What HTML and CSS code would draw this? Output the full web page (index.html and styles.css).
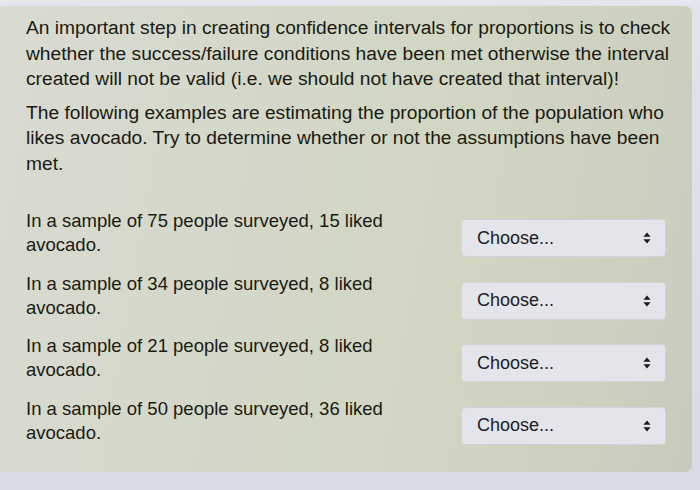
FILE: index.html
```html
<!DOCTYPE html>
<html lang="en">
<head>
<meta charset="utf-8">
<title>Confidence intervals</title>
<link rel="stylesheet" href="styles.css">
</head>
<body>
<div class="panel">
  <p class="para">An important step in creating confidence intervals for proportions is to check whether the success/failure conditions have been met otherwise the interval created will not be valid (i.e. we should not have created that interval)!</p>
  <p class="para">The following examples are estimating the proportion of the population who likes avocado. Try to determine whether or not the assumptions have been met.</p>
  <div class="items">
    <div class="item">
      <div class="question">In a sample of 75 people surveyed, 15 liked avocado.</div>
      <div class="select"><span>Choose...</span><svg class="arrows" width="8" height="12" viewBox="0 0 8 12"><path d="M4 0.5 L7.6 4.8 L0.4 4.8 Z M4 11.5 L7.6 7.2 L0.4 7.2 Z" fill="#1c1c22"/></svg></div>
    </div>
    <div class="item">
      <div class="question">In a sample of 34 people surveyed, 8 liked avocado.</div>
      <div class="select"><span>Choose...</span><svg class="arrows" width="8" height="12" viewBox="0 0 8 12"><path d="M4 0.5 L7.6 4.8 L0.4 4.8 Z M4 11.5 L7.6 7.2 L0.4 7.2 Z" fill="#1c1c22"/></svg></div>
    </div>
    <div class="item">
      <div class="question">In a sample of 21 people surveyed, 8 liked avocado.</div>
      <div class="select"><span>Choose...</span><svg class="arrows" width="8" height="12" viewBox="0 0 8 12"><path d="M4 0.5 L7.6 4.8 L0.4 4.8 Z M4 11.5 L7.6 7.2 L0.4 7.2 Z" fill="#1c1c22"/></svg></div>
    </div>
    <div class="item">
      <div class="question">In a sample of 50 people surveyed, 36 liked avocado.</div>
      <div class="select"><span>Choose...</span><svg class="arrows" width="8" height="12" viewBox="0 0 8 12"><path d="M4 0.5 L7.6 4.8 L0.4 4.8 Z M4 11.5 L7.6 7.2 L0.4 7.2 Z" fill="#1c1c22"/></svg></div>
    </div>
  </div>
</div>
</body>
</html>
```

FILE: styles.css
```css
html, body {
  margin: 0;
  padding: 0;
}
body {
  width: 700px;
  height: 490px;
  overflow: hidden;
  background: linear-gradient(180deg, #e6e8ee 0px, #e2e4ec 6px, #d8dae6 100%);
  font-family: "Liberation Sans", Arial, sans-serif;
  color: #1a1a12;
}
.panel {
  margin-top: 6px;
  width: 692px;
  height: 466px;
  box-sizing: border-box;
  padding: 9px 0 0 26px;
  border-radius: 0 7px 7px 0;
  background: linear-gradient(100deg, #dadbd3 0%, #d4d8c9 35%, #d1d7c3 60%, #cdd1c0 85%, #c8cbbc 100%);
}
.para {
  margin: 0 0 8px 0;
  width: 662px;
  font-size: 19.2px;
  line-height: 25.5px;
}
.items {
  margin-top: 33px;
  display: flex;
  flex-direction: column;
  gap: 14.5px;
}
.item {
  display: grid;
  grid-template-columns: 435px 205px;
  align-items: start;
}
.question {
  width: 400px;
  font-size: 18.5px;
  line-height: 24px;
}
.select {
  margin-top: 10px;
  height: 38px;
  box-sizing: border-box;
  display: flex;
  align-items: center;
  justify-content: space-between;
  padding: 0 14px 0 15px;
  background: #e3e5ea;
  border: 1px solid #d2d4d8;
  border-radius: 4px;
  font-size: 18px;
  color: #1c1c24;
}
.arrows {
  display: block;
}
```
